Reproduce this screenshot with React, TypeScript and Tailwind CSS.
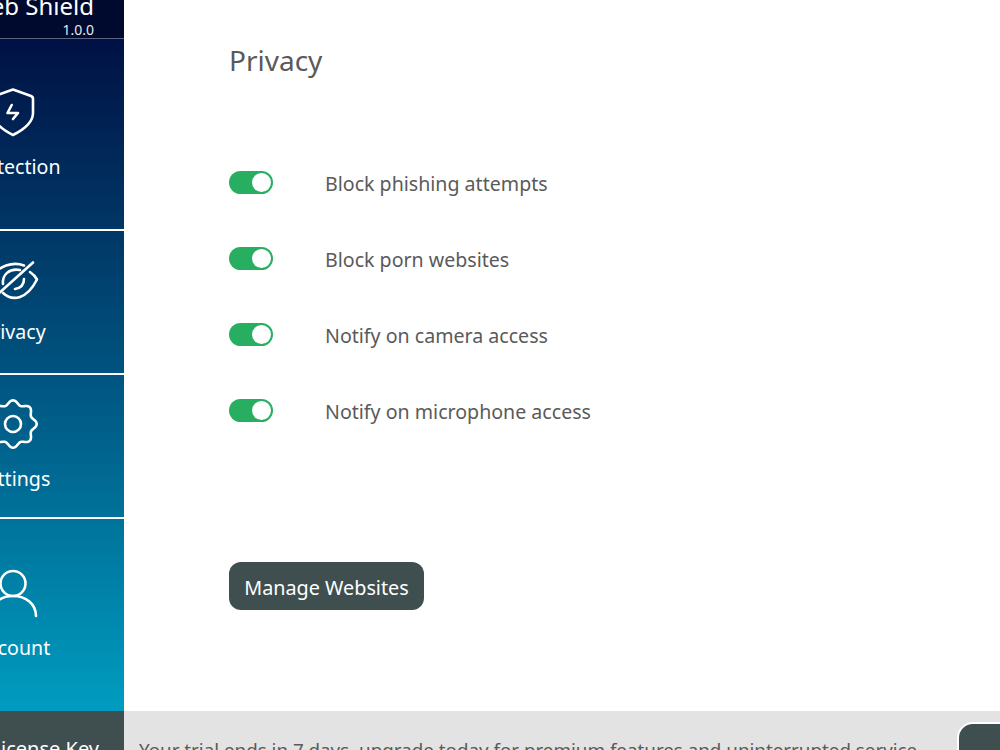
import React from "react"

const font = { fontFamily: '"Noto Sans", "Open Sans", sans-serif' }

// 8 lobed outline for the settings cog
const gearPath =
  Array.from({ length: 145 }, (_, i) => {
    const a = (i / 144) * Math.PI * 2
    const r = 21.6 + 2.1 * Math.cos(8 * a)
    return `${i === 0 ? "M" : "L"}${(24 + r * Math.sin(a)).toFixed(2)} ${(24 - r * Math.cos(a)).toFixed(2)}`
  }).join(" ") + " Z"

function ShieldIcon() {
  return (
    <svg width="48" height="48" viewBox="0 0 48 48" fill="none" stroke="white" strokeWidth="2.6" strokeLinecap="round" strokeLinejoin="round" className="overflow-visible">
      <path d="M24 1.5 L42 8 C43.5 8.6 44 9.5 44 11 V25 C44 34 34 42 24 47 C14 42 4 34 4 25 V11 C4 9.5 4.5 8.6 6 8 Z" />
      <path d="M22.7 17 L18.5 25 H29 L24 31" />
    </svg>
  )
}

function EyeOffIcon() {
  return (
    <svg width="48" height="42" viewBox="0 0 48 42" fill="none" stroke="white" strokeWidth="2.6" strokeLinecap="round" strokeLinejoin="round" className="overflow-visible">
      <path d="M44 3.5 L4 39.5" />
      <path d="M35 6.5 C24 2.5 10 6 0 20.5 C2 24 5 28 8 30" />
      <path d="M14 34 C24 43 38 40 48 20.5 C46 17 44 15 41 13" />
      <path d="M14 25 C13 16 20 9 31 11" />
      <path d="M26 30 C32 29 35 25 35 20" />
    </svg>
  )
}

function GearIcon() {
  return (
    <svg width="48" height="48" viewBox="0 0 48 48" fill="none" stroke="white" strokeWidth="2.6" strokeLinecap="round" strokeLinejoin="round" className="overflow-visible">
      <circle cx="24" cy="24" r="8" />
      <path d={gearPath} />
    </svg>
  )
}

function UserIcon() {
  return (
    <svg width="48" height="48" viewBox="0 0 48 48" fill="none" stroke="white" strokeWidth="2.6" strokeLinecap="round" className="overflow-visible">
      <circle cx="24" cy="14.5" r="12.5" />
      <path d="M1 47 C1 35 11 27 24 27 C37 27 47 35 47 47" />
    </svg>
  )
}

function NavItem({ label, height, icon, line }: { label: string; height: string; icon: React.ReactNode; line?: boolean }) {
  return (
    <div className={`flex flex-col items-center justify-center ${height} ${line ? "border-b-2 border-white" : ""}`}>
      {icon}
      <span className="text-[19.6px] leading-[26px] text-white mt-[18px]">{label}</span>
    </div>
  )
}

function Toggle() {
  return (
    <div className="flex items-center justify-end w-[44px] h-[23px] rounded-full bg-[#27ae60] pr-[2px]">
      <div className="w-[19px] h-[19px] rounded-full bg-white" />
    </div>
  )
}

const rows = ["Block phishing attempts", "Block porn websites", "Notify on camera access", "Notify on microphone access"]

export default function App() {
  return (
    <div className="w-[1000px] h-[750px] overflow-hidden bg-white" style={font}>
      <div className="flex flex-col -mt-[20px] -ml-[98px] w-[1198px]">
        <div className="flex h-[731px]">
          <aside className="flex flex-col w-[222px] shrink-0 bg-gradient-to-b from-[#00043a] to-[#009dc0]">
            <div className="flex flex-col items-end h-[59px] pr-[30px] border-b border-[#5a6480] bg-[#000a2e]">
              <span className="text-[24px] leading-[30px] text-white mt-[11px]">Web Shield</span>
              <span className="text-[14px] leading-[18px] text-[#e6e9ee]">1.0.0</span>
            </div>
            <NavItem label="Protection" height="h-[192px]" icon={<ShieldIcon />} line />
            <NavItem label="Privacy" height="h-[144px]" icon={<EyeOffIcon />} line />
            <NavItem label="Settings" height="h-[144px]" icon={<GearIcon />} line />
            <NavItem label="Account" height="h-[192px]" icon={<UserIcon />} />
          </aside>
          <main className="flex flex-col flex-1 pl-[105px] pt-[61px]">
            <h1 className="text-[28px] leading-[38px] text-[#5a5a5a]">Privacy</h1>
            <div className="flex flex-col mt-[91px] gap-[52px]">
              {rows.map((r) => (
                <div key={r} className="flex items-center h-[24px]">
                  <Toggle />
                  <span className="ml-[52px] pt-[3px] text-[19.6px] text-[#5a5a5a]">{r}</span>
                </div>
              ))}
            </div>
            <button className="mt-[140px] w-[195px] h-[48px] pt-[3px] rounded-[12px] bg-[#3f4f4f] text-white text-[19.8px]">Manage Websites</button>
          </main>
        </div>
        <footer className="flex h-[80px]">
          <div className="flex justify-end w-[222px] shrink-0 pt-[23px] pr-[25px] bg-[#3f4f4f] text-white text-[20px]">License Key</div>
          <div className="flex flex-1 items-start bg-[#e3e3e3] pl-[15px] pt-[25px] text-[#5a5a5a] text-[18.8px]">
            <span className="whitespace-nowrap">Your trial ends in 7 days, upgrade today for premium features and uninterrupted service.</span>
            <div className="ml-auto mt-[-14px] w-[143px] h-[60px] shrink-0 rounded-[16px] border-2 border-white bg-[#3f4f4f]" />
          </div>
        </footer>
      </div>
    </div>
  )
}
